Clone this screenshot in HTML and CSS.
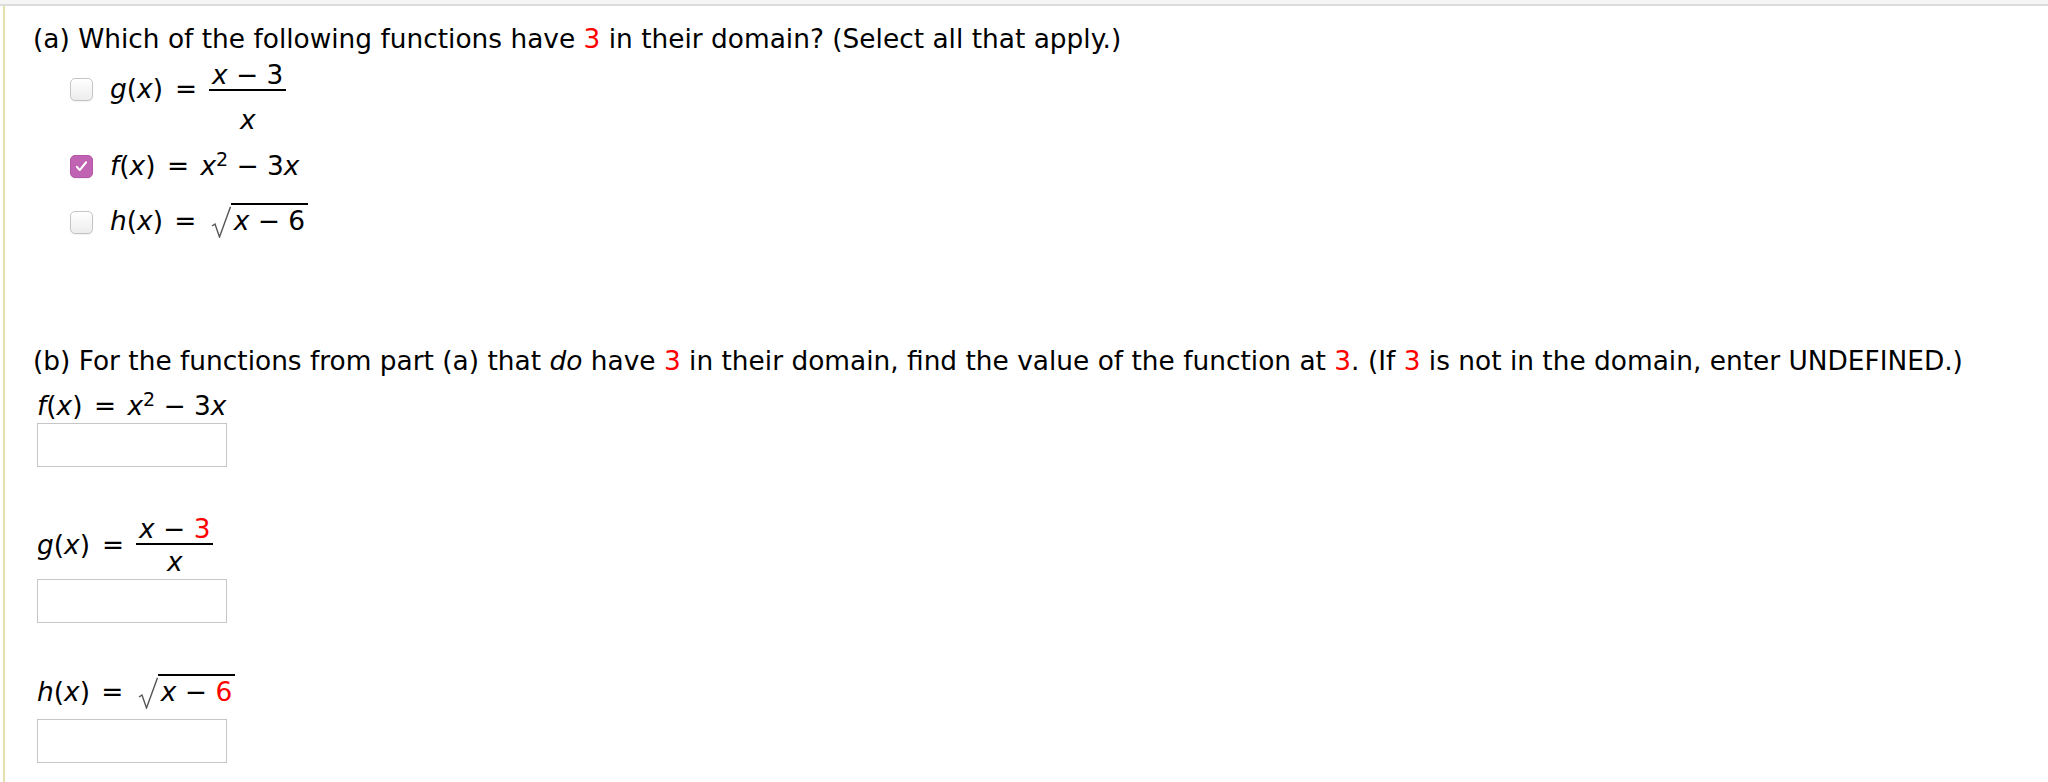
FILE: index.html
```html
<!DOCTYPE html>
<html lang="en">
<head>
<meta charset="utf-8">
<title>Domain question</title>
<link rel="stylesheet" href="styles.css">
</head>
<body>
<div class="topbar"></div>
<main class="question">
  <p class="prompt">(a) Which of the following functions have <span class="hl">3</span> in their domain? (Select all that apply.)</p>
  <ul class="choices">
    <li class="choice choice-frac">
      <span class="cb"></span>
      <span class="math math-frac"><span><i>g</i>(<i>x</i>)</span><span class="eq">=</span><span class="frac frac-tall"><span class="num"><i>x</i> − 3</span><span class="den"><i>x</i></span></span></span>
    </li>
    <li class="choice choice-f">
      <span class="cb checked"><svg viewBox="0 0 24 24" width="17" height="17"><path d="M5.5 12.5l4 4.5L18.5 6" fill="none" stroke="#fff" stroke-width="2.8" stroke-linecap="round" stroke-linejoin="round"/></svg></span>
      <span class="math"><i>f</i>(<i>x</i>) <span class="eq">=</span> <i>x</i><sup>2</sup> − 3<i>x</i></span>
    </li>
    <li class="choice choice-h">
      <span class="cb"></span>
      <span class="math"><i>h</i>(<i>x</i>) <span class="eq">=</span> <svg class="rad" viewBox="0 0 20 32" width="20" height="32"><polyline points="1,20 4,18 8.5,31 19.5,0.8" fill="none" stroke="#555" stroke-width="1.4"/></svg><span class="radicand"><i>x</i> − 6</span></span>
    </li>
  </ul>

  <p class="prompt prompt-b">(b) For the functions from part (a) that <i>do</i> have <span class="hl">3</span> in their domain, find the value of the function at <span class="hl">3</span>. (If <span class="hl">3</span> is not in the domain, enter UNDEFINED.)</p>

  <div class="answers">
    <div class="answer answer-f">
      <div class="math"><i>f</i>(<i>x</i>) <span class="eq">=</span> <i>x</i><sup>2</sup> − 3<i>x</i></div>
      <input class="box" type="text" aria-label="f(3)">
    </div>
    <div class="answer answer-g">
      <div class="math math-frac"><span><i>g</i>(<i>x</i>)</span><span class="eq">=</span><span class="frac"><span class="num"><i>x</i> − <span class="hl">3</span></span><span class="den"><i>x</i></span></span></div>
      <input class="box" type="text" aria-label="g(3)">
    </div>
    <div class="answer answer-h">
      <div class="math"><i>h</i>(<i>x</i>) <span class="eq">=</span> <svg class="rad" viewBox="0 0 20 32" width="20" height="32"><polyline points="1,20 4,18 8.5,31 19.5,0.8" fill="none" stroke="#555" stroke-width="1.4"/></svg><span class="radicand"><i>x</i> − <span class="hl">6</span></span></div>
      <input class="box" type="text" aria-label="h(3)">
    </div>
  </div>
</main>
</body>
</html>
```

FILE: styles.css
```css
html, body {
  margin: 0;
  padding: 0;
  background: #fff;
}

body {
  font-family: "DejaVu Sans", Verdana, sans-serif;
  font-size: 26.4px;
  color: #000;
}

.topbar {
  height: 4px;
  background: #f5f5f5;
  border-bottom: 2px solid #dcdcdc;
}

.question {
  margin-left: 3px;
  border-left: 2px solid #e4e1ae;
  padding: 18px 0 0 28px;
  min-height: 776px;
  box-sizing: border-box;
}

.prompt {
  margin: 0;
  line-height: 30px;
}

.hl {
  color: #ff0000;
}

i {
  font-style: italic;
}

.choices {
  list-style: none;
  margin: 7px 0 0;
  padding: 0 0 0 37px;
}

.choice {
  display: flex;
  align-items: center;
  gap: 17px;
}

.choice-frac {
  height: 56px;
}

.choice-f {
  height: 40px;
  margin-top: 29px;
}

.choice-h {
  height: 40px;
  margin-top: 16px;
}

.cb {
  flex: none;
  width: 23px;
  height: 23px;
  box-sizing: border-box;
  border: 1px solid #c4c4c4;
  border-radius: 5px;
  background: linear-gradient(#ffffff, #ececec);
  box-shadow: 0 1px 1px rgba(0, 0, 0, 0.06);
}

.cb.checked {
  display: flex;
  align-items: center;
  justify-content: center;
  background: #c063b3;
  border-color: #b358a6;
}

.math {
  line-height: 30px;
  white-space: nowrap;
}

.eq {
  margin: 0 3px;
}

.math-frac {
  display: flex;
  align-items: center;
}

.math-frac .eq {
  margin: 0 12px;
}

.frac {
  display: inline-flex;
  flex-direction: column;
  align-items: stretch;
  text-align: center;
}

.num {
  line-height: 26px;
  padding: 0 3px 1px;
}

.den {
  border-top: 2px solid #000;
  line-height: 26px;
  padding-top: 4px;
}

.frac-tall .num {
  padding-top: 16px;
}

.frac-tall .den {
  padding-top: 16px;
}

sup {
  font-size: 0.72em;
  line-height: 0;
  vertical-align: 0.5em;
}

.rad {
  vertical-align: -8px;
  margin-left: 3px;
}

.radicand {
  border-top: 2px solid #000;
  padding: 0 3px 0 3px;
}

.prompt-b {
  margin-top: 104px;
}

.answers {
  padding-left: 4px;
}

.answer-f {
  margin-top: 15px;
}

.answer-g {
  margin-top: 48px;
}

.answer-g .math {
  height: 60px;
}

.answer-h {
  margin-top: 54px;
}

.box {
  display: block;
  width: 190px;
  height: 44px;
  margin: 2px 0 0;
  padding: 0;
  box-sizing: border-box;
  border: 1px solid #c6c6c6;
  border-radius: 0;
  background: #fff;
  font: inherit;
}

.answer-g .box {
  margin-top: 4px;
}

.answer-h .box {
  margin-top: 10px;
}
```
